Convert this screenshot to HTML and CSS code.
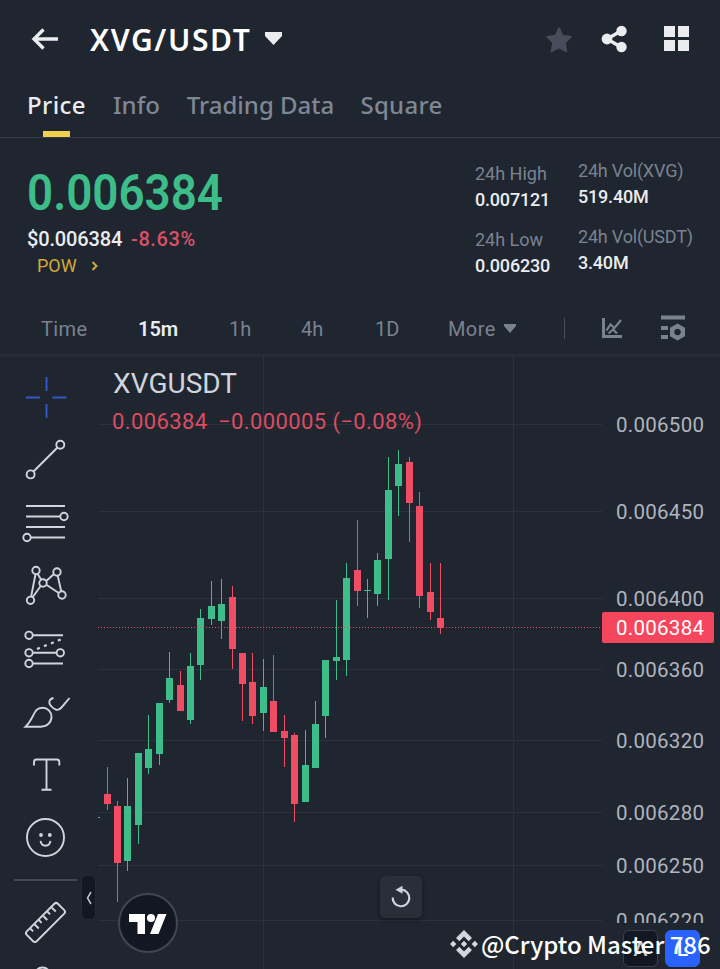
FILE: index.html
```
<!DOCTYPE html>
<html lang="en">

  <head>
    <meta charset="UTF-8">
    <meta name="viewport" content="width=device-width, initial-scale=1.0">
    <title>XVG/USDT</title>
    <link rel="stylesheet" href="styles.css">
  </head>

  <body>
    <header class="header">
      <svg class="back" width="28" height="22" viewBox="0 0 28 22"><path d="M12.500 1.500L3 11l9.500 9.500M3.500 11H27" /></svg>
      <h1>XVG/USDT</h1>
      <svg class="caret" width="17" height="14" viewBox="0 0 17 14"><path d="M0 0h17v4L8.500 13 0 4z" /></svg>
      <div class="header-icons">
        <svg class="star" width="28" height="28" viewBox="0 0 28 28"><path d="M14 2l3.600 7.600 8.400 1.200-6 6 1.500 8.700L14 21.500l-7.500 4L8 16.800l-6-6 8.400-1.200z" /></svg>
        <svg class="share" width="28" height="28" viewBox="0 0 28 28">
          <path d="M21 6L7 14l14 8" />
          <circle cx="21.500" cy="6" r="5.200" />
          <circle cx="7" cy="14" r="5.400" />
          <circle cx="21.500" cy="22" r="5.200" />
        </svg>
        <svg class="grid" width="25" height="25" viewBox="0 0 25 25"><path d="M0 0h11v11H0zM14 0h11v11H14zM0 14h11v11H0zM14 14h11v11H14z" /></svg>
      </div>
    </header>

    <nav class="tabs">
      <a class="tab active t-price">Price</a>
      <a class="tab t-info">Info</a>
      <a class="tab t-trading">Trading Data</a>
      <a class="tab t-square">Square</a>
    </nav>

    <section class="summary">
      <div class="price">
        <div class="last">0.006384</div>
        <div class="sub"><span class="usd">$0.006384</span><span class="change">-8.63%</span></div>
        <div class="tag"><span>POW</span><svg width="8" height="10" viewBox="0 0 8 10"><path d="M1.500 1l4 4-4 4" /></svg></div>
      </div>
      <div class="stats range">
        <div class="label">24h High</div>
        <div class="value">0.007121</div>
        <div class="label">24h Low</div>
        <div class="value">0.006230</div>
      </div>
      <div class="stats volume">
        <div class="label">24h Vol(XVG)</div>
        <div class="value">519.40M</div>
        <div class="label">24h Vol(USDT)</div>
        <div class="value">3.40M</div>
      </div>
    </section>

    <div class="intervals">
      <span class="i-time">Time</span>
      <span class="i-15m active">15m</span>
      <span class="i-1h">1h</span>
      <span class="i-4h">4h</span>
      <span class="i-1d">1D</span>
      <span class="i-more">More</span>
      <svg class="more-caret" width="12" height="9" viewBox="0 0 12 9"><path d="M0 0h12v2L6 9 0 2z" /></svg>
      <i class="separator"></i>
      <svg class="chart-type" width="20" height="21" viewBox="0 0 20 21"><path d="M1.500 0v18.500H20" /><path class="thin" d="M4.500 12.500l4-6 4 3.500 6.500-8M6.500 15.500l4.500-4 4 4" /></svg>
      <svg class="settings" width="26" height="26" viewBox="0 0 26 26">
        <path d="M1 .5h24v4H1zM1 11h7v4H1zM1 20h7v4H1z" />
        <path fill-rule="evenodd" d="M17.500 8.500l7.500 4.300v8.500l-7.500 4.200-7.500-4.200v-8.500zM17.500 13.700a3.300 3.300 0 1 0 .01 0z" />
      </svg>
    </div>

    <main class="chart">
      <aside class="tools">
        <div class="tool selected"><svg viewBox="0 0 48 48"><path d="M24.500 4v14M24.500 31v14M4 24.500h14M30.500 24.500h14" /></svg></div>
        <div class="tool"><svg viewBox="0 0 48 48"><path d="M11.500 35.500l24-24" /><circle cx="38.300" cy="8.700" r="4" /><circle cx="8.600" cy="38.400" r="4" /></svg></div>
        <div class="tool"><svg viewBox="0 0 48 48"><path d="M4 7h39M4 17.500h34M4 28h39M9 38.500h34" /><circle cx="42" cy="17.500" r="3.700" /><circle cx="5" cy="38.500" r="3.700" /></svg></div>
        <div class="tool">
          <svg viewBox="0 0 48 48">
            <path d="M13.500 12.300L9.200 34.300M15.700 12l3.500 5.700M24.200 19l7.500-6.700M35.700 13.800l3.500 15.500M24.300 22.800l12.500 8.200M18.700 24l-7.900 11" />
            <circle cx="14" cy="8.500" r="3.700" /><circle cx="35" cy="10" r="3.700" /><circle cx="21" cy="21" r="3.700" /><circle cx="40" cy="33" r="3.700" /><circle cx="8.500" cy="38.300" r="3.700" />
          </svg>
        </div>
        <div class="tool">
          <svg viewBox="0 0 48 48">
            <path d="M11 10.300h30M11 27.800h23.500M11 38.500h30" /><path class="dots" d="M15 24l25-10" />
            <circle cx="7" cy="10.300" r="3.700" /><circle cx="7" cy="27.800" r="3.700" /><circle cx="38.300" cy="27.800" r="3.700" /><circle cx="7" cy="38.500" r="3.700" />
          </svg>
        </div>
        <div class="tool"><svg viewBox="0 0 48 48"><path d="M3.500 38.700H19c6.500 0 10.500-4.700 10.500-10 0-5-4-9-9-9-9.500 0-7.500 10-17 19zM31.500 10c-4.500 1-5.500 4.500-2.500 8 3.500 4 7 5.500 10.500 1.500l8-9.500" /></svg></div>
        <div class="tool"><svg viewBox="0 0 48 48"><path d="M12 14.500V11q0-2.500 2.500-2.500h20.300q2.500 0 2.500 2.500v3.500M24.500 8.500v30.300M19.500 38.800h10" /></svg></div>
        <div class="tool"><svg viewBox="0 0 48 48"><circle cx="23.500" cy="23.500" r="18.500" /><path d="M18.500 26.800c1 6.500 9 6.500 10 0" /><circle class="eye" cx="19" cy="21" r="1.900" /><circle class="eye" cx="27.800" cy="21" r="1.900" /></svg></div>
        <hr>
        <div class="tool"><svg viewBox="0 0 48 48"><g transform="rotate(-45 23.500 23.500)"><rect x="1.500" y="16.500" width="44" height="14" rx="2.500" /><path d="M8.500 17v4M14.500 17v6M20.500 17v4M26.500 17v6M32.500 17v4M38.500 17v6" /></g></svg></div>
        <div class="tool"><svg viewBox="0 0 48 48"><circle cx="20.500" cy="14.500" r="8" /></svg></div>
      </aside>

      <div class="plot">
        <svg id="candles" width="623" height="614" viewBox="97 355 623 614"></svg>

        <div class="legend">
          <div class="symbol">XVGUSDT</div>
          <div class="ohlc"><span class="close">0.006384</span><span class="delta">−0.000005 (−0.08%)</span></div>
        </div>

        <div class="collapse"><svg width="8" height="14" viewBox="0 0 8 14"><path d="M6 1L2.500 7 6 13" /></svg></div>

        <div class="tv-logo">
          <svg width="38" height="21" viewBox="0 0 38 21"><path d="M0 0h16v20H8.500V8H0zM29 0h8.500l-8 20H21z" /><circle cx="22" cy="4" r="4" /></svg>
        </div>

        <div class="reset">
          <svg width="22" height="24" viewBox="0 0 22 24"><path class="arc" d="M2.700 12.500a8.300 8.300 0 1 0 9-7.800" /><path class="head" d="M5.500 4.800L12.500.8v8z" /></svg>
        </div>

        <div class="scale">
          <div class="auto">A</div>
          <div class="log">L</div>
        </div>

        <div class="watermark">
          <svg width="28" height="28" viewBox="0 0 28 28"><path d="M14 0l8 8-3.300 3.300L14 6.600l-4.700 4.700L6 8zM14 28l-8-8 3.300-3.300 4.700 4.700 4.700-4.700L22 20zM3.200 10.800L6.400 14l-3.200 3.200L0 14zM24.800 10.800L28 14l-3.200 3.200-3.200-3.200zM14 10.800l3.200 3.200-3.200 3.200-3.200-3.200z" /></svg>
          <span>@Crypto Master 786</span>
        </div>
      </div>
    </main>

    <script>
      // x, high, body top, body bottom, low, up
      const candles = [
        [107, 767, 794, 804, 810, 0],
        [117, 801, 806, 863, 902, 0],
        [127, 778, 806, 861, 871, 1],
        [138, 753, 753, 825, 844, 1],
        [148, 715, 749, 768, 774, 1],
        [159, 703, 703, 754, 765, 1],
        [169, 652, 678, 700, 703, 1],
        [180, 671, 685, 711, 711, 0],
        [190, 653, 666, 720, 724, 1],
        [200, 609, 618, 665, 680, 1],
        [211, 581, 606, 619, 625, 1],
        [221, 579, 604, 621, 639, 1],
        [232, 586, 597, 649, 669, 0],
        [242, 653, 653, 684, 721, 0],
        [252, 653, 682, 716, 724, 0],
        [263, 659, 687, 713, 731, 1],
        [273, 655, 701, 732, 732, 0],
        [284, 715, 731, 738, 767, 0],
        [294, 733, 735, 804, 822, 0],
        [305, 730, 765, 802, 802, 1],
        [315, 701, 724, 768, 768, 1],
        [325, 660, 660, 716, 738, 1],
        [336, 600, 657, 661, 680, 1],
        [346, 563, 578, 660, 676, 1],
        [357, 520, 570, 591, 606, 0],
        [367, 579, 590, 591, 618, 1],
        [377, 553, 560, 594, 606, 1],
        [388, 457, 490, 559, 600, 1],
        [398, 450, 464, 486, 516, 1],
        [409, 457, 462, 503, 542, 0],
        [419, 492, 506, 596, 608, 0],
        [430, 563, 592, 612, 620, 0],
        [440, 563, 618, 628, 634, 0]
      ];

      const prices = [
        ['0.006500', 424],
        ['0.006450', 511],
        ['0.006400', 598],
        ['0.006360', 669],
        ['0.006320', 740],
        ['0.006280', 812],
        ['0.006250', 865],
        ['0.006220', 920]
      ];

      const svg = document.getElementById('candles');

      function add(name, attrs, text) {
        const el = document.createElementNS('http://www.w3.org/2000/svg', name);
        for (let key in attrs) {
          el.setAttribute(key, attrs[key]);
        }
        if (text) {
          el.textContent = text;
        }
        svg.appendChild(el);
      }

      // Grid and price scale
      for (let [label, y] of prices) {
        add('rect', { class: 'line', x: 98, y: y, width: 504, height: 1 });
        add('text', { class: 'scale-label', x: 616, y: y + 8, textLength: 88 }, label);
      }
      for (let x of [263, 513]) {
        add('rect', { class: 'line', x: x, y: 355, width: 1, height: 614 });
      }
      add('rect', { class: 'cover', x: 604, y: 923, width: 116, height: 46 });

      for (let [x, high, top, bottom, low, up] of candles) {
        const dir = up ? 'up' : 'down';
        add('rect', { class: dir, x: x, y: high, width: 1, height: low - high });
        add('rect', { class: dir, x: x - 3, y: top, width: 7, height: bottom - top });
      }
      add('rect', { class: 'tick', x: 98, y: 817, width: 2, height: 1 });

      // Last price
      add('path', { class: 'last-line', d: 'M98 627.500H602' });
      add('rect', { class: 'last-box', x: 602, y: 612, width: 112, height: 31, rx: 2 });
      add('text', { class: 'scale-label last-label', x: 616, y: 635, textLength: 88 }, '0.006384');
    </script>
  </body>

</html>
```
FILE: styles.css
```
* {
  box-sizing: border-box;
}

body {
  margin: 0;
  width: 720px;
  height: 969px;
  overflow: hidden;
  background-color: #1f2630;
  color: #eaecef;
  font-family: "Noto Sans", "Open Sans", sans-serif;
}

svg {
  display: block;
  flex: none;
}

.header {
  display: flex;
  align-items: center;
  height: 77px;
  padding: 0 31px 0 31px;
}

.back {
  fill: none;
  stroke: #eaecef;
  stroke-width: 3.4;
}

h1 {
  width: 160px;
  margin: 2px 0 0 31px;
  font-size: 30px;
  font-weight: 600;
  line-height: 40px;
  letter-spacing: 1.600px;
  color: #fff;
  white-space: nowrap;
}

.caret {
  margin-left: 15px;
  fill: #eaecef;
}

.header-icons {
  display: flex;
  align-items: center;
  margin-left: auto;
}

.star {
  margin-top: 2px;
  margin-right: -1px;
  fill: #474d5a;
  stroke: #474d5a;
  stroke-width: 1.500;
  stroke-linejoin: round;
}

.share {
  margin-left: 28px;
  fill: #eaecef;
}

.share path {
  fill: none;
  stroke: #eaecef;
  stroke-width: 3.500;
}

.grid {
  margin-left: 36px;
  fill: #eaecef;
}

.tabs {
  display: flex;
  height: 61px;
  padding-left: 27px;
  border-bottom: 1px solid #343b46;
}

.tab {
  display: flex;
  flex-direction: column;
  align-items: center;
  justify-content: space-between;
  height: 60px;
  padding-top: 12px;
  font-size: 24px;
  font-weight: 500;
  line-height: 32px;
  color: #7f8694;
  white-space: nowrap;
}

.tab.active {
  color: #eaecef;
}

.tab.active::after {
  content: "";
  width: 27px;
  height: 6px;
  background-color: #f0d04c;
}

.t-price {
  width: 59px;
  letter-spacing: 0.400px;
}

.t-info {
  width: 47px;
  margin-left: 27px;
}

.t-trading {
  width: 147px;
  margin-left: 27px;
}

.t-square {
  width: 83px;
  margin-left: 26px;
  letter-spacing: 0.300px;
}

.summary {
  display: flex;
  height: 164px;
  font-family: Roboto, sans-serif;
  white-space: nowrap;
}

.price {
  width: 475px;
  padding: 27px 0 0 27px;
}

.last {
  font-size: 50px;
  font-weight: 600;
  line-height: 56px;
  color: #3dbd8a;
  transform: scaleX(0.915);
  transform-origin: left;
}

.sub {
  display: flex;
  margin-top: 5px;
  font-size: 20px;
  font-weight: 500;
  line-height: 26px;
}

.usd {
  width: 104px;
  letter-spacing: -0.150px;
}

.change {
  letter-spacing: 0.600px;
  color: #d9506a;
}

.tag {
  display: flex;
  align-items: center;
  gap: 14px;
  margin-top: 1px;
  padding-left: 10px;
  font-size: 18px;
  line-height: 26px;
  color: #d3a83a;
}

.tag svg {
  fill: none;
  stroke: #d3a83a;
  stroke-width: 2;
}

.stats {
  width: 103px;
  padding-top: 23px;
  font-size: 18px;
}

.volume {
  width: 130px;
  padding-top: 20px;
}

.label {
  line-height: 26px;
  color: #7b828f;
}

.volume .label {
  letter-spacing: -0.200px;
}

.value {
  margin-bottom: 14px;
  font-weight: 500;
  line-height: 26px;
  letter-spacing: -0.200px;
}

.intervals {
  display: flex;
  align-items: center;
  height: 55px;
  padding-left: 41px;
  border-bottom: 3px solid #252c37;
  font-family: Roboto, sans-serif;
  font-size: 20px;
  color: #7b828f;
}

.intervals span {
  padding-top: 1px;
}

.intervals .active {
  font-weight: 600;
  color: #eaecef;
}

.i-time {
  width: 97px;
  letter-spacing: 0.400px;
}

.i-15m {
  width: 91px;
}

.i-1h {
  width: 72px;
}

.i-4h {
  width: 74px;
}

.i-1d {
  width: 73px;
}

.i-more {
  width: 56px;
  letter-spacing: 0.400px;
}

.more-caret {
  fill: #7b828f;
}

.separator {
  width: 1px;
  height: 21px;
  margin-left: 48px;
  background-color: #474e5a;
}

.chart-type {
  margin-left: 37px;
  fill: none;
  stroke: #7b828f;
  stroke-width: 3;
}

.chart-type .thin {
  stroke-width: 2.200;
}

.settings {
  margin-left: 38px;
  fill: #7b828f;
}

.chart {
  display: flex;
  height: 614px;
  margin-top: -2px;
}

.tools {
  flex: none;
  width: 97px;
  padding: 11px 0 0 22px;
}

.tool {
  display: flex;
  align-items: center;
  height: 62.9px;
}

.tool svg {
  width: 48px;
  height: 48px;
  fill: none;
  stroke: #d1d4dc;
  stroke-width: 1.900;
  overflow: visible;
}

.tool.selected svg {
  stroke: #3159c4;
}

.tool .dots {
  stroke-width: 2.200;
  stroke-dasharray: 3 4.500;
}

.tool .eye {
  fill: #d1d4dc;
  stroke: none;
}

.tools hr {
  width: 63px;
  height: 2px;
  margin: 10px 0 10px -8px;
  border: none;
  background-color: #434954;
}

.plot {
  position: relative;
  width: 623px;
  font-family: Roboto, sans-serif;
}

.line {
  fill: #2c313b;
}

.cover {
  fill: #1f2630;
}

.up {
  fill: #3dbd8a;
}

.down {
  fill: #f04d64;
}

.tick {
  fill: #7b9a91;
}

.scale-label {
  font-size: 20.500px;
  fill: #b0b4be;
}

.last-line {
  stroke: #d85468;
  stroke-width: 1;
  stroke-dasharray: 1 2;
}

.last-box {
  fill: #f6465d;
}

.last-label {
  fill: #fff;
}

.legend {
  position: absolute;
  left: 15px;
  top: 12px;
  white-space: nowrap;
}

.symbol {
  font-size: 28px;
  line-height: 34px;
  padding-left: 1px;
  color: #d1d4dc;
}

.ohlc {
  display: flex;
  margin-top: 7px;
  font-size: 22px;
  line-height: 28px;
  letter-spacing: 0.400px;
  color: #dc4c62;
}

.close {
  width: 106px;
}

.collapse {
  position: absolute;
  left: -16px;
  top: 520px;
  display: flex;
  align-items: center;
  justify-content: center;
  width: 15px;
  height: 45px;
  border: 1px solid #252a34;
  border-radius: 6px;
  background-color: #131722;
}

.collapse svg {
  fill: none;
  stroke: #c0c4cc;
  stroke-width: 1.500;
}

.tv-logo {
  position: absolute;
  left: 21px;
  top: 538px;
  display: flex;
  align-items: center;
  justify-content: center;
  width: 60px;
  height: 60px;
  border: 2px solid #434651;
  border-radius: 50%;
  background-color: #131722;
}

.tv-logo svg {
  margin-top: 2px;
  fill: #fff;
}

.reset {
  position: absolute;
  left: 283px;
  top: 521px;
  display: flex;
  align-items: center;
  justify-content: center;
  width: 42px;
  height: 42px;
  border-radius: 5px;
  background-color: #2a2e39;
  box-shadow: 0 2px 5px rgba(0, 0, 0, 0.4);
}

.reset .arc {
  fill: none;
  stroke: #d1d4dc;
  stroke-width: 2.200;
}

.reset .head {
  fill: #d1d4dc;
}

.scale {
  position: absolute;
  left: 526px;
  top: 575px;
  display: flex;
  gap: 7px;
  font-size: 21px;
  font-weight: 500;
  line-height: 37px;
  text-align: center;
}

.auto,
.log {
  width: 35px;
  height: 37px;
  border: 1px solid #3a3e49;
  border-radius: 6px;
  background-color: #131722;
  color: #c4c7d0;
}

.log {
  border-color: #2962ff;
  background-color: #2962ff;
  color: #fff;
}

.watermark {
  position: absolute;
  left: 353px;
  top: 571px;
  display: flex;
  align-items: center;
  gap: 3px;
  height: 36px;
  font-family: "Noto Sans CJK SC", sans-serif;
  font-size: 24px;
  font-weight: 500;
  line-height: 36px;
  color: #fff;
  white-space: nowrap;
}

.watermark svg {
  fill: #d6d7da;
}
```
